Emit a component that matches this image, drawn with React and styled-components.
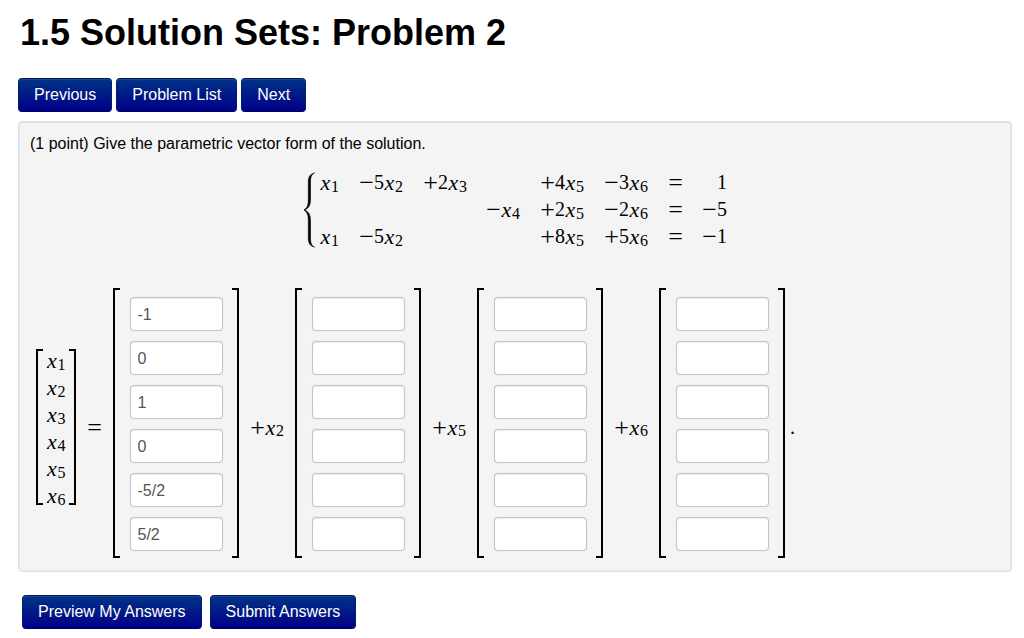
import React from "react";
import styled, { createGlobalStyle } from "styled-components";

const GlobalStyle = createGlobalStyle`
  *, *::before, *::after { box-sizing: border-box; }
  body {
    margin: 0;
    background: #fff;
    color: #000;
    font: 16px/20px "Liberation Sans", Arial, sans-serif;
  }
`;

const Page = styled.main`
  padding: 13px 12px 8px 18px;
`;

const Title = styled.h1`
  margin: 0 0 25px;
  padding-left: 2px;
  font-size: 36px;
  line-height: 40px;
  font-weight: 700;
`;

const ButtonRow = styled.div`
  display: flex;
  flex-wrap: wrap;
  gap: ${(p) => (p.$wide ? 8 : 4)}px;
  padding-left: ${(p) => (p.$wide ? 4 : 0)}px;
`;

const Button = styled.button`
  height: 34px;
  padding: 0 15px;
  border: 1px solid #00205f;
  border-color: #001c58 #00206e #000060;
  border-radius: 4px;
  background: linear-gradient(#003388, #000088);
  box-shadow: inset 0 1px 0 rgba(255, 255, 255, 0.1);
  color: #fff;
  font: inherit;
  text-shadow: 0 -1px 0 rgba(0, 0, 0, 0.25);
  white-space: nowrap;
  cursor: pointer;
`;

const Panel = styled.section`
  margin: 9px 0 23px;
  padding: 12px 10px 13px 11px;
  border: 1px solid #dedede;
  border-radius: 4px;
  background: #f4f4f4;
  box-shadow: inset 0 1px 1px rgba(0, 0, 0, 0.06), inset 0 0 0 1px #ebebeb;
`;

const Prompt = styled.p`
  margin: 0;
`;

const System = styled.div`
  display: flex;
  justify-content: center;
  align-items: center;
  gap: 5px;
  margin: 15px 0 38px;
`;

const Equations = styled.div`
  display: grid;
  grid-template-columns: 19px 44px 44px 33px 44px 44px 15px 24px;
  grid-auto-rows: 27px;
  column-gap: 20px;
  justify-items: end;
`;

const MathText = styled.span`
  display: inline-flex;
  align-items: center;
  height: 27px;
  font-family: "Liberation Serif", "Times New Roman", serif;
  font-size: 20px;
  line-height: 27px;
  white-space: nowrap;
`;

const Operator = styled.span`
  width: 15px;
  font-size: 26px;
  text-align: center;
`;

const Variable = styled.i`
  width: 11px;
  font-size: 22px;
  text-align: center;
`;

const Subscript = styled.sub`
  width: 8px;
  padding-top: 8px;
  font-size: 16px;
  line-height: 20px;
  text-align: right;
  vertical-align: baseline;
`;

const VectorRow = styled.div`
  display: flex;
  align-items: center;
  gap: 11px;
  padding-left: 6px;
`;

const OnAxis = styled.div`
  display: flex;
  align-items: center;
  gap: 11px;
  padding-top: 8px;
`;

const Closing = styled.div`
  display: flex;
  align-items: center;
  gap: 5px;
`;

const Bracketed = styled.div`
  display: flex;
  align-items: stretch;
  justify-content: space-between;
  width: ${(p) => (p.$small ? 40 : 126)}px;
  height: ${(p) => (p.$small ? 156 : 270)}px;

  &::before,
  &::after {
    content: "";
    width: 7px;
    border: 2px solid #000;
  }
  &::before { border-right: 0; }
  &::after { border-left: 0; }
`;

const Stack = styled.div`
  display: flex;
  flex-direction: column;
  justify-content: center;
  gap: ${(p) => p.$gap}px;
  padding-top: 2px;
`;

const Entry = styled.input`
  width: 93px;
  height: 34px;
  padding: 1px 7px 0;
  border: 1px solid #c6c6c6;
  border-radius: 4px;
  background: #fff;
  box-shadow: inset 0 1px 1px rgba(0, 0, 0, 0.075), 0 0 1px #ccc;
  color: #555;
  font: inherit;
`;

function Term({ children }) {
  if (!children) return <span />;
  return (
    <MathText>
      {Array.from(children).map((c, i, all) => {
        if ("+−=".includes(c)) return <Operator key={i}>{c}</Operator>;
        if (c === "x") return <Variable key={i}>x</Variable>;
        if (all[i - 1] === "x") return <Subscript key={i}>{c}</Subscript>;
        return <span key={i}>{c}</span>;
      })}
    </MathText>
  );
}

const Brace = () => (
  <svg width="11" height="76" viewBox="0 0 11 76" aria-hidden="true">
    <path
      d="M10.5 1C7.500 2.500 6.500 5 6.500 10V27C6.500 33 5 36 .7 38C5 40 6.500 43 6.500 49V66C6.500 71 7.500 73.500 10.500 75C6 74 4.300 71 4.300 66V49C4.300 43 3.500 40.500 .2 38.300V37.700C3.500 35.500 4.300 33 4.300 27V10C4.300 5 6 2 10.500 1Z"
      fill="#000"
      stroke="#000"
      strokeWidth=".6"
    />
  </svg>
);

const equations = [
  ["x1", "−5x2", "+2x3", "", "+4x5", "−3x6", "=", "1"],
  ["", "", "", "−x4", "+2x5", "−2x6", "=", "−5"],
  ["x1", "−5x2", "", "", "+8x5", "+5x6", "=", "−1"],
];

const vectors = [
  { label: "", name: "constant", values: ["-1", "0", "1", "0", "-5/2", "5/2"] },
  { label: "+x2", name: "x2", values: ["", "", "", "", "", ""] },
  { label: "+x5", name: "x5", values: ["", "", "", "", "", ""] },
  { label: "+x6", name: "x6", values: ["", "", "", "", "", ""] },
];

export default function App() {
  return (
    <Page>
      <GlobalStyle />
      <Title>1.5 Solution Sets: Problem 2</Title>
      <ButtonRow>
        <Button type="button">Previous</Button>
        <Button type="button">Problem List</Button>
        <Button type="button">Next</Button>
      </ButtonRow>
      <form onSubmit={(e) => e.preventDefault()}>
        <Panel>
          <Prompt>(1 point) Give the parametric vector form of the solution.</Prompt>
          <System>
            <Brace />
            <Equations>
              {equations.flatMap((row, r) =>
                row.map((cell, c) => <Term key={`${r}-${c}`}>{cell}</Term>)
              )}
            </Equations>
          </System>
          <VectorRow>
            <OnAxis>
              <Bracketed $small>
                <Stack $gap={0}>
                  {[1, 2, 3, 4, 5, 6].map((n) => (
                    <Term key={n}>{`x${n}`}</Term>
                  ))}
                </Stack>
              </Bracketed>
              <Term>=</Term>
            </OnAxis>
            {vectors.map((v, index) => (
              <React.Fragment key={v.name}>
                {v.label && (
                  <OnAxis>
                    <Term>{v.label}</Term>
                  </OnAxis>
                )}
                <Closing>
                  <Bracketed>
                    <Stack $gap={10}>
                      {v.values.map((value, i) => (
                        <Entry
                          key={i}
                          type="text"
                          defaultValue={value}
                          aria-label={`${v.name} vector, entry ${i + 1}`}
                        />
                      ))}
                    </Stack>
                  </Bracketed>
                  {index === vectors.length - 1 && (
                    <OnAxis>
                      <Term>.</Term>
                    </OnAxis>
                  )}
                </Closing>
              </React.Fragment>
            ))}
          </VectorRow>
        </Panel>
        <ButtonRow $wide>
          <Button type="button">Preview My Answers</Button>
          <Button type="submit">Submit Answers</Button>
        </ButtonRow>
      </form>
    </Page>
  );
}
